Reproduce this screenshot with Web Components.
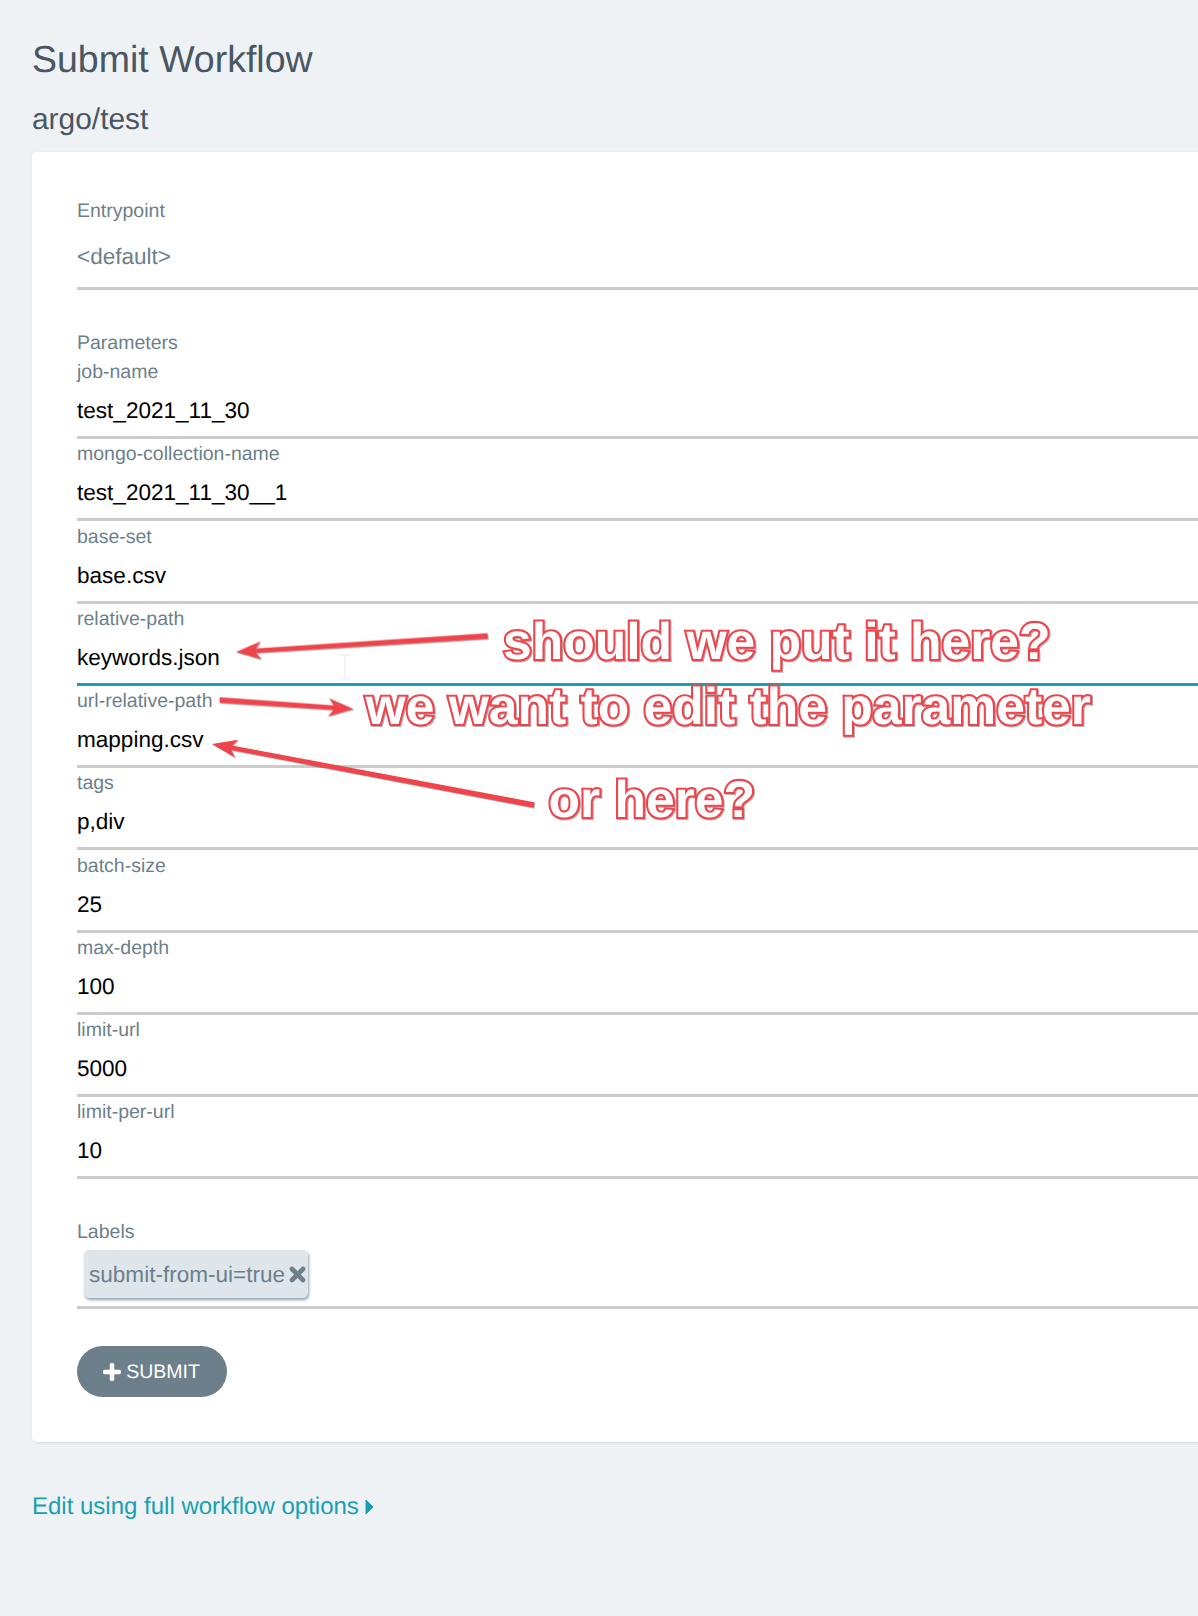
<!doctype html>
<html lang="en">
<head>
<meta charset="utf-8">
<title>Submit Workflow</title>
<style>
  html, body { margin: 0; background: #eef2f5; }
</style>
</head>
<body>
<wf-page>
  <span slot="title">Submit Workflow</span>
  <span slot="subtitle">argo/test</span>
  <wf-card>
    <wf-select label="Entrypoint">&lt;default&gt;</wf-select>
    <wf-caption>Parameters</wf-caption>
    <wf-field label="job-name">test_2021_11_30</wf-field>
    <wf-field label="mongo-collection-name">test_2021_11_30__1</wf-field>
    <wf-field label="base-set">base.csv</wf-field>
    <wf-field label="relative-path" focused>keywords.json</wf-field>
    <wf-field label="url-relative-path">mapping.csv</wf-field>
    <wf-field label="tags">p,div</wf-field>
    <wf-field label="batch-size">25</wf-field>
    <wf-field label="max-depth">100</wf-field>
    <wf-field label="limit-url">5000</wf-field>
    <wf-field label="limit-per-url">10</wf-field>
    <wf-tags label="Labels"><wf-chip>submit-from-ui=true</wf-chip></wf-tags>
    <wf-button>SUBMIT</wf-button>
  </wf-card>
  <wf-link>Edit using full workflow options</wf-link>
  <wf-callouts slot="overlay"></wf-callouts>
</wf-page>

<script>
const SANS = '"Liberation Sans", Arial, sans-serif'

class WfElement extends HTMLElement {
  constructor() {
    super()
    this.attachShadow({ mode: 'open' })
  }

  connectedCallback() {
    this.shadowRoot.innerHTML = this.markup()
  }
}

class WfPage extends WfElement {
  markup() {
    return `
      <style>
        :host {
          display: block;
          position: relative;
          height: 1616px;
          overflow: hidden;
          box-sizing: border-box;
          padding: 37px 0 0 32px;
          background: #eef2f5;
          color: #495763;
          font-family: ${SANS};
          text-rendering: geometricPrecision;
        }
        h1, h2 { margin: 0; font-weight: 400; }
        h1 { font-size: 37.5px; line-height: 44px; margin-bottom: 21px; }
        h2 { font-size: 29.9px; line-height: 36px; margin-bottom: 14px; }
      </style>
      <h1><slot name="title"></slot></h1>
      <h2><slot name="subtitle"></slot></h2>
      <slot></slot>
      <slot name="overlay"></slot>
    `
  }
}

class WfCard extends WfElement {
  markup() {
    return `
      <style>
        :host {
          display: block;
          box-sizing: border-box;
          width: 1240px;
          height: 1290px;
          padding: 47px 0 0 45px;
          background: #fff;
          border-radius: 5px;
          box-shadow: 1px 1px 3px #d1d9df;
        }
      </style>
      <slot></slot>
    `
  }
}

const LABEL_CSS = `
  .label { color: #6d7f8b; font-size: 19.5px; line-height: 24px; padding-top: 1px; margin-bottom: -1px; }
`

class WfSelect extends WfElement {
  markup() {
    return `
      <style>
        ${LABEL_CSS}
        :host { display: block; margin-bottom: 40px; }
        .label { padding-top: 0; margin-bottom: 0; }
        .value {
          margin-top: 19px;
          padding-bottom: 15px;
          color: #6d7f8b;
          font-size: 22.55px;
          line-height: 30px;
          border-bottom: 3px solid #ccc;
        }
      </style>
      <div class="label">${this.getAttribute('label')}</div>
      <div class="value"><slot></slot></div>
    `
  }
}

class WfCaption extends WfElement {
  markup() {
    return `
      <style>
        ${LABEL_CSS}
        :host { display: block; margin-bottom: 5px; }
      </style>
      <div class="label"><slot></slot></div>
    `
  }
}

class WfField extends WfElement {
  markup() {
    return `
      <style>
        ${LABEL_CSS}
        :host { display: block; margin-bottom: 2.25px; }
        .value {
          margin-top: 13px;
          padding-bottom: 10px;
          color: #000;
          font-size: 22.55px;
          line-height: 30px;
          border-bottom: 3px solid #ccc;
        }
        :host([focused]) .value { border-bottom-color: #18a0b2; }
      </style>
      <div class="label">${this.getAttribute('label')}</div>
      <div class="value"><slot></slot></div>
    `
  }
}

class WfTags extends WfElement {
  markup() {
    return `
      <style>
        ${LABEL_CSS}
        :host { display: block; margin-top: 40px; margin-bottom: 37px; }
        .value {
          margin-top: 7px;
          padding: 0 0 8px 6.5px;
          border-bottom: 3px solid #ccc;
        }
      </style>
      <div class="label">${this.getAttribute('label')}</div>
      <div class="value"><slot></slot></div>
    `
  }
}

class WfChip extends WfElement {
  markup() {
    return `
      <style>
        :host {
          display: inline-flex;
          align-items: center;
          box-sizing: border-box;
          width: 224px;
          height: 48px;
          padding: 0 2px 0 5.5px;
          background: #dee6eb;
          color: #6d7f8b;
          border-radius: 5px;
          font-size: 22.55px;
          white-space: nowrap;
          box-shadow: 1px 2px 3px #8fa4b1;
          vertical-align: top;
        }
        span { padding-top: 2px; }
        svg { margin-left: auto; flex: none; }
      </style>
      <span><slot></slot></span>
      <svg width="17" height="17" viewBox="0 0 17 17" aria-hidden="true">
        <path d="M3 3l11 11M14 3L3 14" stroke="#6d7f8b" stroke-width="4.6" stroke-linecap="round" fill="none"/>
      </svg>
    `
  }
}

class WfButton extends WfElement {
  markup() {
    return `
      <style>
        :host {
          display: inline-flex;
          align-items: center;
          justify-content: center;
          width: 150px;
          height: 51px;
          gap: 4px;
          background: #6d7f8b;
          color: #fff;
          border-radius: 26px;
          font-size: 19.5px;
        }
        span { padding-top: 2px; }
        svg { transform: translateX(-1px); }
      </style>
      <svg width="18" height="18" viewBox="0 0 18 18" aria-hidden="true">
        <path d="M9 2v14M2 9h14" stroke="#fff" stroke-width="4.6" stroke-linecap="round" fill="none"/>
      </svg>
      <span><slot></slot></span>
    `
  }
}

class WfLink extends WfElement {
  markup() {
    return `
      <style>
        :host {
          display: flex;
          align-items: center;
          gap: 6px;
          margin-top: 50px;
          color: #18a0b2;
          font-size: 24px;
          line-height: 30px;
        }
      </style>
      <span><slot></slot></span>
      <svg width="9" height="16" viewBox="0 0 9 16" aria-hidden="true">
        <path d="M1 1l7 7L1 15z" fill="#18a0b2" stroke="#18a0b2" stroke-linejoin="round"/>
      </svg>
    `
  }
}

// the hand drawn notes on top of the form
class WfCallouts extends WfElement {
  arrow(x1, y1, x2, y2) {
    const deg = Math.atan2(y2 - y1, x2 - x1) * 180 / Math.PI
    const len = Math.hypot(x2 - x1, y2 - y1)
    return `
      <g transform="translate(${x1} ${y1}) rotate(${deg})">
        <path d="M0 -2.7L${len - 20} -2.2L${len - 25} -9L${len} 0L${len - 25} 9L${len - 20} 2.2L0 2.7z" fill="#ef444c"/>
      </g>`
  }

  markup() {
    return `
      <style>
        :host { position: absolute; left: 0; top: 0; width: 1198px; height: 1616px; display: block; pointer-events: none; }
        svg { display: block; }
        text {
          font-family: ${SANS};
          font-weight: 700;
          font-size: 51.6px;
          fill: #fff;
          stroke: #ef444c;
          stroke-width: 4.2px;
          stroke-linejoin: miter;
          paint-order: stroke;
        }
        .shadow { filter: drop-shadow(1px 1px 0 rgba(0,0,0,.3)); }
      </style>
      <svg width="1198" height="1616" viewBox="0 0 1198 1616">
        <path d="M339 655h12M339 679h12M345 655v24" stroke="#eceeef" stroke-width="1.2" fill="none"/>
        <g class="shadow">
          ${this.arrow(487.6, 636, 236, 652)}
          ${this.arrow(219.6, 700, 353.5, 709)}
          ${this.arrow(534, 805, 212, 744)}
          <text x="503" y="659">should we put it here?</text>
          <text x="365.5" y="724">we want to edit the parameter</text>
          <text x="548.5" y="817">or here?</text>
        </g>
      </svg>
    `
  }
}

customElements.define('wf-page', WfPage)
customElements.define('wf-card', WfCard)
customElements.define('wf-select', WfSelect)
customElements.define('wf-caption', WfCaption)
customElements.define('wf-field', WfField)
customElements.define('wf-tags', WfTags)
customElements.define('wf-chip', WfChip)
customElements.define('wf-button', WfButton)
customElements.define('wf-link', WfLink)
customElements.define('wf-callouts', WfCallouts)
</script>
</body>
</html>
